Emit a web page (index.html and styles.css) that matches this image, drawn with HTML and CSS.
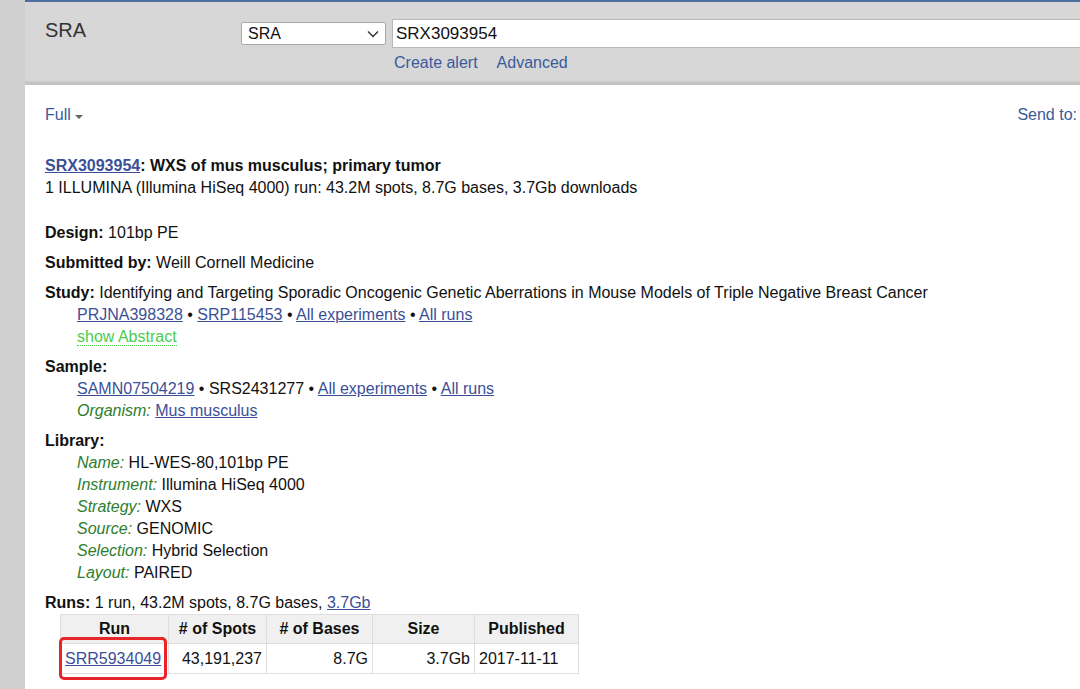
FILE: index.html
```html
<!DOCTYPE html>
<html>
<head>
<meta charset="utf-8">
<link rel="stylesheet" href="styles.css">
</head>
<body>
<div class="page">
  <div class="side"></div>
  <div class="main">
    <header class="header">
      <div class="brand">SRA</div>
      <div class="search">
        <div class="search-row">
          <div class="select">
            <span>SRA</span>
            <svg class="chev" width="12" height="8" viewBox="0 0 12 8"><path d="M1 1.5 L6 6.5 L11 1.5" fill="none" stroke="#333" stroke-width="1.4"/></svg>
          </div>
          <div class="input">SRX3093954</div>
        </div>
        <div class="search-links">
          <a class="hlink">Create alert</a>
          <a class="hlink">Advanced</a>
        </div>
      </div>
    </header>
    <div class="content">
      <div class="toolbar">
        <a class="hlink full">Full <span class="caret"></span></a>
        <a class="hlink sendto">Send to:</a>
      </div>
      <div class="title"><a class="link">SRX3093954</a>: WXS of mus musculus; primary tumor</div>
      <div class="subtitle">1 ILLUMINA (Illumina HiSeq 4000) run: 43.2M spots, 8.7G bases, 3.7Gb downloads</div>

      <div class="field"><b>Design:</b> 101bp PE</div>
      <div class="field"><b>Submitted by:</b> Weill Cornell Medicine</div>
      <div class="field">
        <b>Study:</b> Identifying and Targeting Sporadic Oncogenic Genetic Aberrations in Mouse Models of Triple Negative Breast Cancer
        <div class="sub"><a class="link">PRJNA398328</a> &bull; <a class="link">SRP115453</a> &bull; <a class="link">All experiments</a> &bull; <a class="link">All runs</a></div>
        <div class="sub"><a class="abstract">show Abstract</a></div>
      </div>
      <div class="field">
        <b>Sample:</b>
        <div class="sub"><a class="link">SAMN07504219</a> &bull; SRS2431277 &bull; <a class="link">All experiments</a> &bull; <a class="link">All runs</a></div>
        <div class="sub"><i class="lbl">Organism:</i> <a class="link">Mus musculus</a></div>
      </div>
      <div class="field">
        <b>Library:</b>
        <div class="sub"><i class="lbl">Name:</i> HL-WES-80,101bp PE</div>
        <div class="sub"><i class="lbl">Instrument:</i> Illumina HiSeq 4000</div>
        <div class="sub"><i class="lbl">Strategy:</i> WXS</div>
        <div class="sub"><i class="lbl">Source:</i> GENOMIC</div>
        <div class="sub"><i class="lbl">Selection:</i> Hybrid Selection</div>
        <div class="sub"><i class="lbl">Layout:</i> PAIRED</div>
      </div>
      <div class="field runs"><b>Runs:</b> 1 run, 43.2M spots, 8.7G bases, <a class="link">3.7Gb</a></div>
      <div class="table-wrap">
        <table class="runs-table">
          <colgroup><col class="c-run"><col class="c-spots"><col class="c-bases"><col class="c-size"><col class="c-pub"></colgroup>
          <thead>
            <tr><th>Run</th><th># of Spots</th><th># of Bases</th><th>Size</th><th>Published</th></tr>
          </thead>
          <tbody>
            <tr><td><a class="link">SRR5934049</a></td><td class="num">43,191,237</td><td class="num">8.7G</td><td class="num">3.7Gb</td><td>2017-11-11</td></tr>
          </tbody>
        </table>
        <div class="highlight"></div>
      </div>
    </div>
  </div>
</div>
</body>
</html>
```

FILE: styles.css
```css
* { box-sizing: border-box; }
html, body { margin: 0; padding: 0; }
body {
  font-family: "Liberation Sans", Arial, sans-serif;
  font-size: 16px;
  color: #111;
  background: #fff;
  overflow: hidden;
}
.page {
  display: flex;
  min-height: 689px;
}
.side {
  width: 25px;
  flex: none;
  background: #cfcfcf;
}
.main {
  flex: 1;
  min-width: 0;
}
.header {
  height: 85px;
  background: #d7d7d7;
  border-top: 2px solid #4d6f9f;
  border-bottom: 3px solid #c4c4c4;
  box-shadow: inset 0 -1px 0 #cdcdcd;
  display: flex;
  padding-left: 20px;
}
.brand {
  width: 196px;
  flex: none;
  font-size: 20px;
  color: #333;
  padding-top: 17px;
}
.search {
  flex: 1;
  min-width: 0;
  padding-top: 17px;
}
.search-row {
  display: flex;
  align-items: center;
  gap: 6px;
}
.select {
  width: 145px;
  height: 23px;
  background: #fff;
  border: 1px solid #a9a9a9;
  border-radius: 2px;
  display: flex;
  align-items: center;
  justify-content: space-between;
  padding: 0 6px 0 6px;
  font-size: 16px;
  color: #111;
}
.chev { margin-top: 1px; }
.input {
  flex: 1;
  height: 29px;
  background: #fff;
  border: 1px solid #b8b8b8;
  border-right: none;
  font-size: 17px;
  line-height: 27px;
  padding-left: 3px;
  color: #111;
}
.search-links {
  display: flex;
  gap: 19px;
  padding-left: 153px;
  padding-top: 6px;
}
.hlink {
  color: #3a5a9c;
  font-size: 16px;
  text-decoration: none;
}
.sendto { margin-right: 3px; }
.content {
  padding: 0 0 0 20px;
}
.toolbar {
  display: flex;
  justify-content: space-between;
  align-items: flex-start;
  padding-top: 21px;
  height: 70px;
}
.full { display: inline-flex; align-items: center; gap: 4px; }
.caret {
  display: inline-block;
  width: 0; height: 0;
  border-left: 4.5px solid transparent;
  border-right: 4.5px solid transparent;
  border-top: 4.5px solid #666;
  margin-top: 3px;
}
.title {
  font-weight: bold;
  line-height: 22px;
}
.title .link { font-weight: bold; }
.subtitle {
  line-height: 22px;
  margin-bottom: 23px;
}
.link {
  color: #3b4f98;
  text-decoration: underline;
}
.field {
  line-height: 22px;
  margin-bottom: 8px;
}
.field b { font-weight: bold; }
.sub {
  padding-left: 32px;
}
.abstract {
  color: #4ccc4c;
  text-decoration: none;
  border-bottom: 1px dotted #4ccc4c;
}
.lbl {
  color: #2d7d2d;
}
.runs { margin-bottom: 0; }
.table-wrap {
  position: relative;
  padding-left: 15px;
}
.runs-table {
  border-collapse: collapse;
  table-layout: fixed;
  width: 518px;
  font-size: 16px;
}
.runs-table th, .runs-table td {
  border: 1px solid #dedede;
  padding: 0 4px;
  white-space: nowrap;
}
.runs-table th {
  background: #f0f0f0;
  font-weight: bold;
  height: 29px;
  text-align: center;
}
.runs-table td {
  height: 30px;
  background: #fff;
}
.runs-table td.num { text-align: right; }
.c-run { width: 108px; }
.c-spots { width: 98px; }
.c-bases { width: 106px; }
.c-size { width: 102px; }
.c-pub { width: 104px; }
.highlight {
  position: absolute;
  left: 14px;
  top: 23px;
  width: 108px;
  height: 43px;
  border: 3px solid #e8262a;
  border-radius: 5px;
}
```
